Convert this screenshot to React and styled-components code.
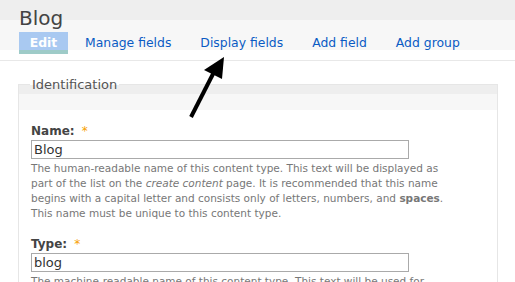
import React from 'react';
import styled, {createGlobalStyle} from "styled-components"

const Global = createGlobalStyle`
    body {
        margin: 0;
        background: #fff;
        font-family: "DejaVu Sans", Verdana, sans-serif;
    }
`

const Page = styled.div`
    position: relative;
    width: 515px;
    height: 282px;
    overflow: hidden;
`

const Header = styled.div`
    height: 60px;
    padding-left: 19px;
    border-bottom: 1px solid #e8e8e8;
    background: linear-gradient(#eeeeee 0 20px, #f7f7f7 20px 50px, #fff 50px);
`

const Title = styled.h1`
    margin: 0;
    padding-top: 6px;
    font-size: 20px;
    font-weight: normal;
    line-height: 24px;
    color: #444;
`

const Tabs = styled.ul`
    display: flex;
    gap: 5px;
    list-style: none;
    margin: 2px 0 0;
    padding: 0;
`

const Tab = styled.li`
    height: 22px;
    width: ${p => p.active ? "49px" : "auto"};
    padding: ${p => p.active ? "2px 0 0" : "2px 12px 0"};
    box-sizing: border-box;
    text-align: center;
    font-size: 12.4px;
    line-height: 18px;
    color: ${p => p.active ? "#fff" : "#0a5bc4"};
    font-weight: ${p => p.active ? "bold" : "normal"};
    background: ${p => p.active ? "#a9c9f1" : "transparent"};
    border-bottom: 4px solid ${p => p.active ? "#9ecbc8" : "transparent"};
`

const Fieldset = styled.fieldset`
    margin: 16px 17px 0 18px;
    padding: 0 12px;
    border: 1px solid #e6e6e6;
    background: linear-gradient(#eeeeee 0 9px, #f7f7f7 9px 25px, #fff 25px);
`

const Legend = styled.legend`
    padding: 0 2px;
    margin-left: -1px;
    font-size: 13px;
    color: #555;
`

const Field = styled.div`
    padding-top: ${p => p.first ? "31px" : "15px"};
`

const Label = styled.label`
    display: block;
    font-size: 12px;
    font-weight: bold;
    color: #444;
    line-height: 16px;
    margin-bottom: 1px;
`

const Required = styled.span`
    color: #f7a000;
    font-weight: normal;
    margin-left: 3px;
`

const Input = styled.input`
    display: block;
    box-sizing: border-box;
    width: 378px;
    height: 19px;
    margin: 0;
    padding: 0 2px;
    border: 1px solid #aaa;
    font-family: "DejaVu Sans", Verdana, sans-serif;
    font-size: 13px;
    color: #333;
    outline: none;
`

const Description = styled.div`
    margin-top: 2px;
    font-size: 10.5px;
    line-height: 15px;
    color: #777;
    white-space: nowrap;
`

const Arrow = styled.svg`
    position: absolute;
    left: 0;
    top: 0;
`

const tabs = ["Edit", "Manage fields", "Display fields", "Add field", "Add group"]

const App = () => {
    return (
        <Page>
            <Global/>
            <Header>
                <Title>Blog</Title>
                <Tabs>
                    {tabs.map((t, i) => <Tab key={t} active={i === 0}>{t}</Tab>)}
                </Tabs>
            </Header>
            <Fieldset>
                <Legend>Identification</Legend>
                <Field first>
                    <Label>Name: <Required>*</Required></Label>
                    <Input defaultValue="Blog"/>
                    <Description>
                        The human-readable name of this content type. This text will be displayed as<br/>
                        part of the list on the <em>create content</em> page. It is recommended that this name<br/>
                        begins with a capital letter and consists only of letters, numbers, and <b>spaces</b>.<br/>
                        This name must be unique to this content type.
                    </Description>
                </Field>
                <Field>
                    <Label>Type: <Required>*</Required></Label>
                    <Input defaultValue="blog"/>
                    <Description>
                        The machine-readable name of this content type. This text will be used for
                    </Description>
                </Field>
            </Fieldset>
            <Arrow width="515" height="282" viewBox="0 0 515 282">
                <line x1="191" y1="117" x2="214" y2="72" stroke="#000" strokeWidth="4"/>
                <polygon points="224,57 204,70 222,79" fill="#000"/>
            </Arrow>
        </Page>
    );
};

export default App;
